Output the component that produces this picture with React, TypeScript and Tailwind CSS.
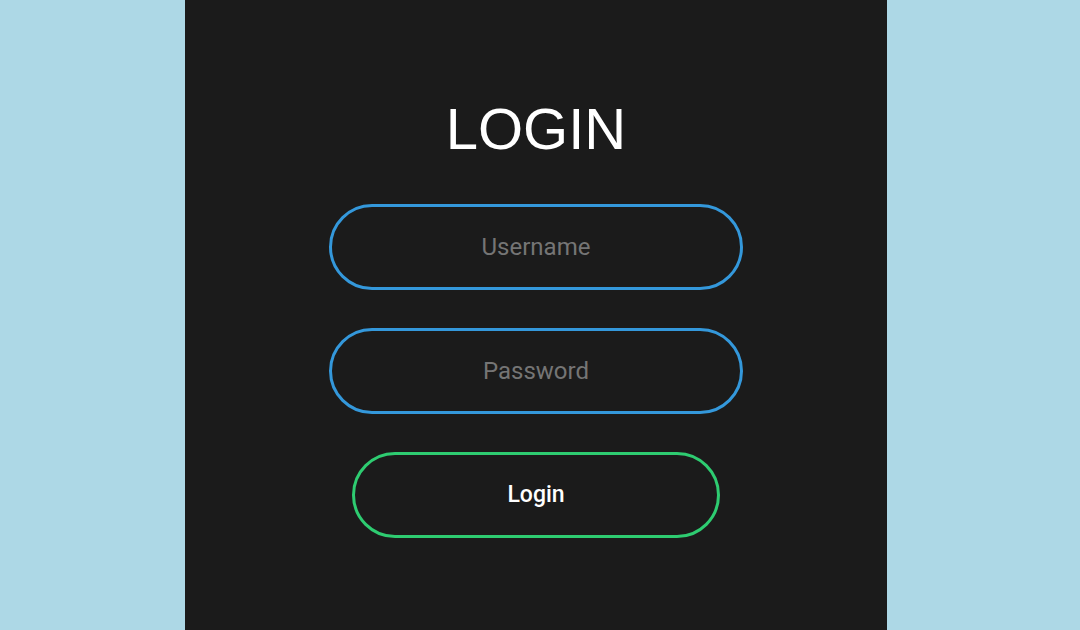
export default function App() {
    return (
        <div className="flex min-h-[630px] w-full justify-center bg-[#add8e6] pr-[8px]">
            <div className="flex w-[702px] flex-col items-center bg-[#1b1b1b] pt-[100px]">
                <h1 className="font-['Liberation_Sans',Arial,sans-serif] text-[58px] leading-none text-white">
                    LOGIN
                </h1>

                <form
                    className="mt-[46px] flex flex-col items-center gap-[38px]"
                    onSubmit={(e) => e.preventDefault()}
                >
                    <input
                        type="text"
                        placeholder="Username"
                        className="h-[86px] w-[414px] rounded-full border-[3px] border-[#3498db] bg-transparent text-center font-['Roboto',sans-serif] text-[24px] text-white outline-none placeholder:text-[#757575]"
                    />
                    <input
                        type="password"
                        placeholder="Password"
                        className="h-[86px] w-[414px] rounded-full border-[3px] border-[#3498db] bg-transparent text-center font-['Roboto',sans-serif] text-[24px] text-white outline-none placeholder:text-[#757575]"
                    />
                    <button
                        type="submit"
                        className="h-[86px] w-[368px] rounded-full border-[3px] border-[#2ecc71] bg-transparent font-['Roboto',sans-serif] text-[23px] font-medium text-white"
                    >
                        Login
                    </button>
                </form>
            </div>
        </div>
    );
}
